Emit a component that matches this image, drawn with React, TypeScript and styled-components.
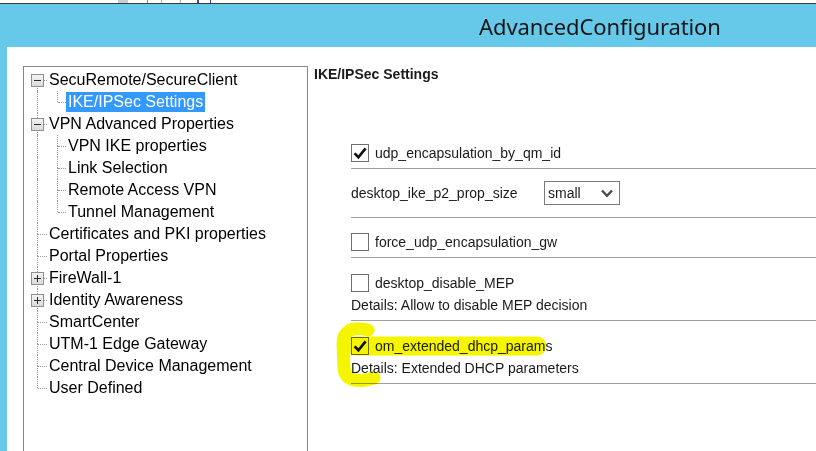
import React from 'react';
import styled, { createGlobalStyle } from 'styled-components';

const GlobalStyle = createGlobalStyle`
  html, body {
    margin: 0;
    padding: 0;
    background: #fff;
    overflow: hidden;
  }
  #root {
    width: 816px;
    height: 451px;
  }
`;

const Screen = styled.div`
  position: relative;
  width: 816px;
  height: 451px;
  display: flex;
  flex-direction: column;
  overflow: hidden;
  font-family: "Liberation Sans", Arial, sans-serif;
  color: #1a1a1a;
`;

// leftovers of the window behind, cut off at the top edge
const TopStrip = styled.div`
  height: 3px;
  display: flex;
  background: #fff;
  border-bottom: 1px solid #3a3a3a;
`;

const StripMark = styled.span<{ $left: number; $w: number; $color: string }>`
  margin-left: ${p => p.$left}px;
  width: ${p => p.$w}px;
  background: ${p => p.$color};
`;

const TitleBar = styled.header`
  height: 43px;
  flex-shrink: 0;
  display: flex;
  align-items: center;
  padding-left: 479px;
  background: #66c9ea;
`;

const Title = styled.h1`
  margin: 0;
  font-family: "Noto Sans", "Open Sans", sans-serif;
  font-weight: 400;
  font-size: 22px;
  letter-spacing: -0.1px;
  color: #161616;
`;

const Body = styled.div`
  flex: 1;
  min-height: 0;
  display: flex;
  background: #fff;
  border-left: 7px solid #66c9ea;
`;

/* ---------- tree ---------- */

const Tree = styled.ul`
  list-style: none;
  box-sizing: border-box;
  width: 285px;
  flex-shrink: 0;
  margin: 19px 0 0 16px;
  padding: 2px 0 0 3px;
  border: 1px solid #828790;
  border-bottom: none;
`;

const Row = styled.li`
  display: flex;
  height: 22px;
`;

const Gutter = styled.span<{ $w: number }>`
  display: grid;
  width: ${p => p.$w}px;
  flex-shrink: 0;
`;

const VLine = styled.span<{ $half: 'top' | 'bottom' | 'full' }>`
  grid-area: 1 / 1;
  justify-self: start;
  margin-left: 10px;
  align-self: ${p => (p.$half === 'top' ? 'start' : p.$half === 'bottom' ? 'end' : 'stretch')};
  height: ${p => (p.$half === 'full' ? 'auto' : '11px')};
  border-left: 1px dotted #9a9a9a;
`;

const Stub = styled.span`
  grid-area: 1 / 1;
  align-self: center;
  justify-self: end;
  width: calc(100% - 11px);
  border-top: 1px dotted #9a9a9a;
`;

const Expander = styled.span`
  grid-area: 1 / 1;
  align-self: center;
  justify-self: start;
  margin-left: 4px;
  box-sizing: border-box;
  width: 13px;
  height: 13px;
  display: grid;
  border: 1px solid #8e8f8f;
  background: linear-gradient(#f4f4f4, #dadada);
`;

const Bar = styled.span<{ $vertical?: boolean }>`
  grid-area: 1 / 1;
  place-self: center;
  width: ${p => (p.$vertical ? 1 : 7)}px;
  height: ${p => (p.$vertical ? 7 : 1)}px;
  background: #2b2b2b;
`;

const Label = styled.span<{ $selected?: boolean }>`
  align-self: center;
  padding: 0 2px;
  font-size: 16px;
  line-height: 20px;
  white-space: nowrap;
  color: ${p => (p.$selected ? '#fff' : '#000')};
  background: ${p => (p.$selected ? '#3399ff' : 'transparent')};
`;

/* ---------- settings ---------- */

const Settings = styled.section`
  flex: 1;
  display: flex;
  flex-direction: column;
  padding-top: 18px;
`;

const Heading = styled.h2`
  margin: 0 0 0 6px;
  font-size: 14px;
  line-height: 18px;
  font-weight: bold;
  color: #1a1a1a;
`;

const Section = styled.div<{ $top: number; $bottom?: number }>`
  margin-left: 43px;
  padding: ${p => p.$top}px 0 ${p => p.$bottom ?? 5}px;
  border-bottom: 1px solid #a0a0a0;
`;

const CheckRow = styled.label`
  display: flex;
  align-items: center;
  gap: 6px;
  height: 20px;
  font-size: 14px;
`;

const Box = styled.span`
  box-sizing: border-box;
  width: 18px;
  height: 18px;
  display: flex;
  border: 1px solid #6e6e6e;
  background: #fff;
`;

const Details = styled.div`
  margin-top: 2px;
  height: 20px;
  line-height: 20px;
  font-size: 14px;
`;

const SelectRow = styled.div`
  display: flex;
  align-items: center;
  height: 24px;
  font-size: 14px;
`;

const SelectLabel = styled.span`
  width: 193px;
`;

const Select = styled.div`
  box-sizing: border-box;
  width: 76px;
  height: 24px;
  display: flex;
  align-items: center;
  padding: 0 6px 0 3px;
  border: 1px solid #7a7a7a;
`;

const Chevron = styled.svg`
  margin-left: auto;
`;

const Marker = styled.svg`
  position: absolute;
  inset: 0;
  pointer-events: none;
  mix-blend-mode: multiply;
`;

type Node = {
  label: string;
  level: 0 | 1;
  last?: boolean;
  toggle?: '-' | '+';
  selected?: boolean;
};

const nodes: Node[] = [
  { label: 'SecuRemote/SecureClient', level: 0, toggle: '-' },
  { label: 'IKE/IPSec Settings', level: 1, last: true, selected: true },
  { label: 'VPN Advanced Properties', level: 0, toggle: '-' },
  { label: 'VPN IKE properties', level: 1 },
  { label: 'Link Selection', level: 1 },
  { label: 'Remote Access VPN', level: 1 },
  { label: 'Tunnel Management', level: 1, last: true },
  { label: 'Certificates and PKI properties', level: 0 },
  { label: 'Portal Properties', level: 0 },
  { label: 'FireWall-1', level: 0, toggle: '+' },
  { label: 'Identity Awareness', level: 0, toggle: '+' },
  { label: 'SmartCenter', level: 0 },
  { label: 'UTM-1 Edge Gateway', level: 0 },
  { label: 'Central Device Management', level: 0 },
  { label: 'User Defined', level: 0, last: true },
];

function TreeRow({ node, first }: { node: Node; first: boolean }) {
  return (
    <Row>
      {node.level === 1 && (
        <Gutter $w={20}>
          <VLine $half="full" />
        </Gutter>
      )}
      <Gutter $w={node.level === 1 ? 19 : 20}>
        {!first && <VLine $half="top" />}
        {!node.last && <VLine $half="bottom" />}
        <Stub />
        {node.toggle && (
          <Expander>
            <Bar />
            {node.toggle === '+' && <Bar $vertical />}
          </Expander>
        )}
      </Gutter>
      <Label $selected={node.selected}>{node.label}</Label>
    </Row>
  );
}

function Checkbox({ checked }: { checked?: boolean }) {
  return (
    <Box>
      {checked && (
        <svg width="16" height="16" viewBox="0 0 16 16">
          <path d="M2.6 8.4 L6.4 12.3 L13.6 3.4" fill="none" stroke="#111" strokeWidth="2.7" />
        </svg>
      )}
    </Box>
  );
}

export default function App() {
  return (
    <Screen>
      <GlobalStyle />
      <TopStrip>
        <StripMark $left={118} $w={10} $color="#c3cfd8" />
        <StripMark $left={19} $w={1} $color="#8a8a8a" />
        <StripMark $left={13} $w={1} $color="#b0b0b0" />
        <StripMark $left={18} $w={1} $color="#b0b0b0" />
        <StripMark $left={16} $w={2} $color="#2b4fa8" />
        <StripMark $left={11} $w={1} $color="#2b4fa8" />
      </TopStrip>
      <TitleBar>
        <Title>AdvancedConfiguration</Title>
      </TitleBar>
      <Body>
        <Tree>
          {nodes.map((n, i) => (
            <TreeRow key={n.label} node={n} first={i === 0} />
          ))}
        </Tree>
        <Settings>
          <Heading>IKE/IPSec Settings</Heading>
          <Section $top={60}>
            <CheckRow>
              <Checkbox checked />
              udp_encapsulation_by_qm_id
            </CheckRow>
          </Section>
          <Section $top={12} $bottom={12}>
            <SelectRow>
              <SelectLabel>desktop_ike_p2_prop_size</SelectLabel>
              <Select>
                small
                <Chevron width="12" height="9" viewBox="0 0 12 9">
                  <path d="M1 1.5 L6 6.8 L11 1.5" fill="none" stroke="#4a4a4a" strokeWidth="2.4" />
                </Chevron>
              </Select>
            </SelectRow>
          </Section>
          <Section $top={14}>
            <CheckRow>
              <Checkbox />
              force_udp_encapsulation_gw
            </CheckRow>
          </Section>
          <Section $top={15}>
            <CheckRow>
              <Checkbox />
              desktop_disable_MEP
            </CheckRow>
            <Details>Details: Allow to disable MEP decision</Details>
          </Section>
          <Section $top={15}>
            <CheckRow>
              <Checkbox checked />
              om_extended_dhcp_params
            </CheckRow>
            <Details>Details: Extended DHCP parameters</Details>
          </Section>
        </Settings>
      </Body>
      <Marker width="816" height="451" viewBox="0 0 816 451">
        <g fill="none" stroke="#f5f500" strokeLinecap="round" strokeLinejoin="round">
          <path d="M368 330 C352 326 343 331 343 344 L344 368 C345 381 358 383 374 378" strokeWidth="13" />
          <path d="M356 346 L537 346" strokeWidth="19" />
        </g>
      </Marker>
    </Screen>
  );
}
